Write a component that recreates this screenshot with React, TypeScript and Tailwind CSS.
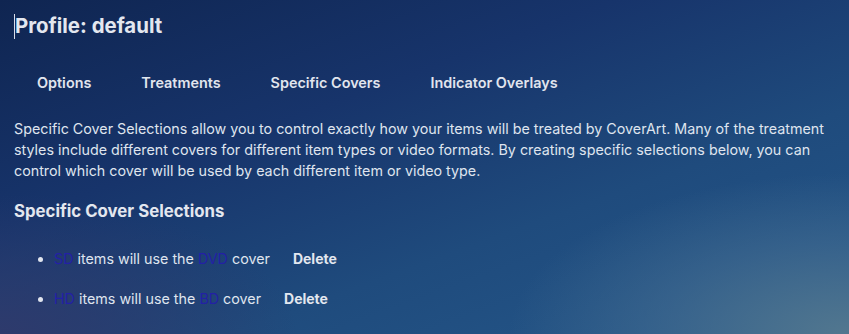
import React from "react";

const tabs = ["Options", "Treatments", "Specific Covers", "Indicator Overlays"];

const selections = [
  { item: "SD", cover: "DVD" },
  { item: "HD", cover: "BD" },
];

export default function App() {
  return (
    <div
      className="min-h-[334px] w-full overflow-hidden text-[#dfe4ee] bg-[radial-gradient(ellipse_50%_60%_at_100%_100%,#52778f_0%,rgba(70,110,145,0.55)_45%,rgba(40,90,135,0)_80%),radial-gradient(ellipse_50%_60%_at_0%_100%,#2e3a6c_0%,rgba(40,56,104,0)_70%),linear-gradient(160deg,#0f2551_0%,#17346b_35%,#1f4b7d_65%,#25588a_100%)]"
      style={{ fontFamily: "Inter, 'Noto Sans', sans-serif" }}
    >
      <div className="px-[14px] pt-[12px]">
        <h1 className="flex items-center text-[20.4px] font-bold leading-[28px] text-[#e3e7ef]">
          <span className="h-[25px] w-px bg-[#d8dde8]" />
          Profile: default
        </h1>

        <div className="mt-[25px] flex gap-[4px]">
          {tabs.map((t) => (
            <button
              key={t}
              className="px-[23px] py-[8px] text-[14.4px] font-semibold leading-[20px] text-[#e1e5ee]"
            >
              {t}
            </button>
          ))}
        </div>

        <p className="mt-[17px] text-[14.3px] leading-[21px] text-[#dfe4ee]">
          Specific Cover Selections allow you to control exactly how your items will be treated by CoverArt. Many of the
          treatment styles include different covers for different item types or video formats. By creating specific
          selections below, you can control which cover will be used by each different item or video type.
        </p>

        <h2 className="mt-[18px] text-[16.8px] font-bold leading-[24px] text-[#e3e7ef]">Specific Cover Selections</h2>

        <ul className="mt-[25px] list-disc pl-[40px] marker:text-[#e1e5ee]">
          {selections.map((s) => (
            <li key={s.item} className="h-[40px] text-[14.3px] leading-[21px]">
              <span className="text-[#2320a6]">{s.item}</span> items will use the{" "}
              <span className="text-[#2320a6]">{s.cover}</span> cover
              <button className="ml-[23px] text-[14px] font-bold text-[#e3e7ef]">Delete</button>
            </li>
          ))}
        </ul>
      </div>
    </div>
  );
}
